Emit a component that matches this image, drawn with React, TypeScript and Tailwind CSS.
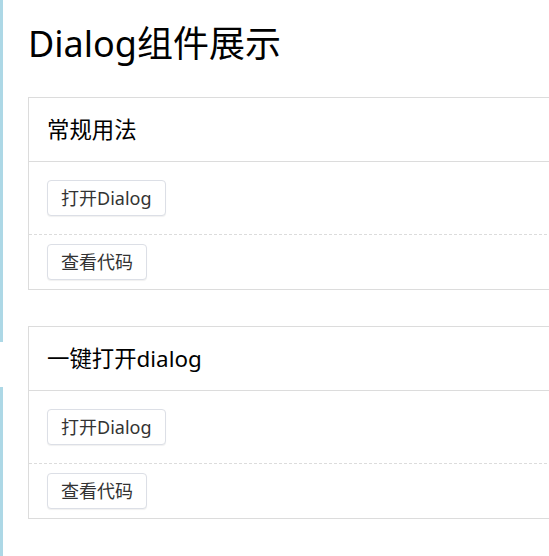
const FONT = { fontFamily: '"Noto Sans", "Noto Sans CJK SC", sans-serif' };

function DemoButton({ label }: { label: string }) {
  return (
    <button className="flex h-[36px] items-center rounded-[4px] border border-[#dcdfe6] bg-white px-[13px] text-[18px] leading-none text-[#333] shadow-[0_1px_1px_rgba(0,0,0,0.06)]">
      {label}
    </button>
  );
}

function DemoCard({ title }: { title: string }) {
  return (
    <div className="w-[600px] border border-[#dcdcdc] bg-white">
      <div className="flex h-[64px] items-center border-b border-[#dcdcdc] px-[18px] text-[22.4px] text-black">
        {title}
      </div>
      <div className="border-b border-dashed border-[#dcdcdc] px-[18px] py-[18px]">
        <DemoButton label="打开Dialog" />
      </div>
      <div className="px-[18px] py-[9px]">
        <DemoButton label="查看代码" />
      </div>
    </div>
  );
}

export default function App() {
  return (
    <div className="flex h-[556px] w-[549px] overflow-hidden bg-white" style={FONT}>
      <div className="flex w-[3px] shrink-0 flex-col">
        <div className="h-[342px] bg-[#add8e6]" />
        <div className="h-[45px]" />
        <div className="flex-1 bg-[#add8e6]" />
      </div>
      <div className="flex-1 pl-[25px]">
        <h1 className="pt-[17px] pb-[26px] text-[36px] leading-[54px] text-black">Dialog组件展示</h1>
        <div className="flex flex-col gap-[36px]">
          <DemoCard title="常规用法" />
          <DemoCard title="一键打开dialog" />
        </div>
      </div>
    </div>
  );
}
